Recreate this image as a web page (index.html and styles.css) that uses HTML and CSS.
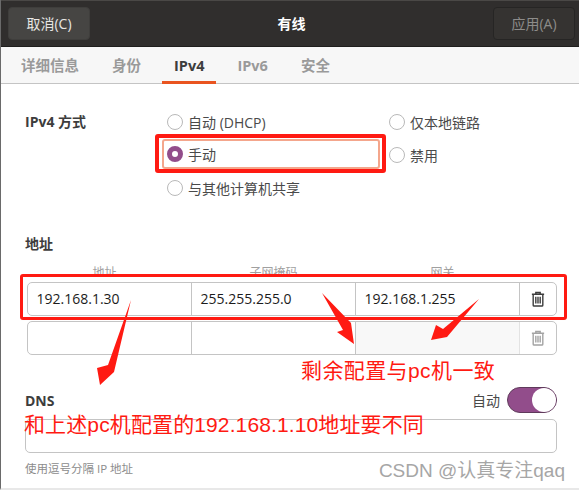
FILE: index.html
```html
<!DOCTYPE html>
<html lang="zh-CN">
<head>
  <meta charset="UTF-8" />
  <title>有线</title>
  <link rel="stylesheet" href="styles.css">
</head>
<body>
  <div class="window">
    <header class="titlebar">
      <button class="btn btn-cancel">取消(C)</button>
      <div class="title">有线</div>
      <button class="btn btn-apply">应用(A)</button>
    </header>

    <nav class="tabs">
      <div class="tab">详细信息</div>
      <div class="tab">身份</div>
      <div class="tab active">IPv4</div>
      <div class="tab">IPv6</div>
      <div class="tab">安全</div>
    </nav>

    <main class="content">
      <section class="method">
        <div class="section-title">IPv4 方式</div>
        <div class="radios">
          <div class="radio"><span class="dot"></span>自动 (DHCP)</div>
          <div class="radio"><span class="dot"></span>仅本地链路</div>
          <div class="radio focused"><span class="dot on"></span>手动</div>
          <div class="radio"><span class="dot"></span>禁用</div>
          <div class="radio"><span class="dot"></span>与其他计算机共享</div>
        </div>
      </section>

      <section class="address">
        <div class="section-title">地址</div>
        <div class="col-labels">
          <span>地址</span><span>子网掩码</span><span>网关</span>
        </div>
        <div class="addr-row">
          <div class="cell">192.168.1.30</div>
          <div class="cell">255.255.255.0</div>
          <div class="cell">192.168.1.255</div>
          <div class="trash">
            <svg width="14" height="16" viewBox="0 0 16 18"><path d="M5.5 3V1.5h5V3M1 3.5h14M2.5 3.5V16q0 1 1 1h9q1 0 1-1V3.5M5.5 6.5V14M8 6.5V14M10.5 6.5V14" fill="none" stroke="#3d3d3d" stroke-width="1.6"/></svg>
          </div>
        </div>
        <div class="addr-row second">
          <div class="cell"></div>
          <div class="cell"></div>
          <div class="cell empty"></div>
          <div class="trash">
            <svg width="14" height="16" viewBox="0 0 16 18"><path d="M5.5 3V1.5h5V3M1 3.5h14M2.5 3.5V16q0 1 1 1h9q1 0 1-1V3.5M5.5 6.5V14M8 6.5V14M10.5 6.5V14" fill="none" stroke="#a3a3a3" stroke-width="1.6"/></svg>
          </div>
        </div>
      </section>

      <section class="dns">
        <div class="dns-head">
          <div class="section-title">DNS</div>
          <div class="auto">自动<span class="switch"><span class="knob"></span></span></div>
        </div>
        <div class="dns-input"></div>
        <div class="hint">使用逗号分隔 IP 地址</div>
      </section>
    </main>

    <!-- 截图上的红色标注 -->
    <div class="mark mark-manual"></div>
    <div class="mark mark-row"></div>
    <svg class="arrows" width="579" height="490" viewBox="0 0 579 490">
      <polygon points="131,300 114,372 100,385 97,368 108,365" fill="#ff1a12"/>
      <polygon points="322,293 351,323 354,344 337,332 343,330" fill="#ff1a12"/>
      <polygon points="479,299 447,337 431,340 436,325 443,329" fill="#ff1a12"/>
    </svg>
    <div class="note note-same">剩余配置与pc机一致</div>
    <div class="note note-diff">和上述pc机配置的192.168.1.10地址要不同</div>
    <div class="watermark">CSDN @认真专注qaq</div>
  </div>
</body>
</html>
```

FILE: styles.css
```css
* { margin: 0; padding: 0; box-sizing: border-box; }

body {
  font-family: "Open Sans", "Noto Sans CJK SC", sans-serif;
  background: #fff;
  color: #3d3d3d;
}

.window {
  position: relative;
  width: 579px;
  height: 490px;
  overflow: hidden;
  display: flex;
  flex-direction: column;
  border-left: 1px solid #6a6a6a;
  border-bottom: 2px solid #e8e8e8;
}

.titlebar {
  height: 47px;
  flex: none;
  display: flex;
  align-items: center;
  justify-content: space-between;
  padding: 0 4px 1px 7px;
  background: #302e2d;
  border-top: 1px solid #4a4846;
  border-bottom: 1px solid #1f1e1d;
}

.btn {
  width: 82px;
  height: 33px;
  border-radius: 4px;
  font-family: inherit;
  font-size: 14px;
}
.btn-cancel { background: #464543; border: 1px solid #3f3e3c; color: #e8e6e3; }
.btn-apply { background: #353331; border: 1px solid #262524; color: #8d8c8a; }

.title {
  color: #fff;
  font-size: 14px;
  font-weight: 700;
}

.tabs {
  height: 37px;
  flex: none;
  display: flex;
  gap: 9px;
  padding-left: 8px;
  background: #f7f7f7;
  border-bottom: 1px solid #c4c4c4;
}

.tab {
  padding: 0 12px;
  line-height: 37px;
  font-size: 14.5px;
  font-weight: 700;
  color: #9a9a9a;
  height: 37px;
}
.tab.active {
  color: #3d3d3d;
  border-bottom: 3px solid #e95420;
}

.content {
  flex: 1;
  padding: 0 22px 0 24px;
}

.section-title {
  font-size: 14px;
  font-weight: 700;
  color: #3d3d3d;
}

.method {
  display: flex;
  padding-top: 25px;
  height: 150px;
}
.method .section-title { width: 142px; line-height: 26px; }

.radios {
  display: grid;
  grid-template-columns: 222px auto;
  grid-auto-rows: 33px;
  align-content: start;
  margin-top: -4px;
  margin-left: -6px;
}

.radio {
  display: flex;
  align-items: center;
  gap: 5px;
  padding-left: 6px;
  font-size: 14px;
  color: #4a4a4a;
}
.radio.focused {
  margin: 1px 3px 2px 1px;
  padding-left: 5px;
  outline: 2px solid #f4a68c;
  outline-offset: -2px;
  border-radius: 3px;
}

.dot {
  width: 16px;
  height: 16px;
  border-radius: 50%;
  border: 1px solid #b9b9b9;
  background: #fff;
}
.dot.on {
  border: 5px solid #924d8b;
  background: #fff;
}

.address .section-title { line-height: 20px; }

.col-labels {
  display: grid;
  grid-template-columns: repeat(3, 169px);
  height: 17px;
  margin: 11px 0 0 -5px;
  font-size: 12px;
  line-height: 16px;
  text-align: center;
  color: #a0a0a0;
}

.addr-row {
  position: relative;
  z-index: 2;
  display: grid;
  grid-template-columns: 164px 164px 164px 35px;
  height: 34px;
  margin-left: 2px;
  border: 1px solid #c4c4c4;
  border-radius: 5px;
  background: #fff;
}
.addr-row.second { margin-top: 5px; }

.cell {
  border-right: 1px solid #c4c4c4;
  padding-left: 8.5px;
  line-height: 31px;
  font-size: 14px;
  color: #1c1c1c;
}
.cell.empty { background: #f8f8f8; border-right-color: #e3e3e3; }

.trash {
  display: flex;
  align-items: center;
  justify-content: center;
}

.dns { padding-top: 32px; }

.dns-head {
  display: flex;
  align-items: center;
  justify-content: space-between;
  height: 26px;
}

.auto {
  display: flex;
  align-items: center;
  gap: 7px;
  font-size: 14px;
  color: #4a4a4a;
}

.switch {
  display: flex;
  justify-content: flex-end;
  width: 50px;
  height: 26px;
  border-radius: 13px;
  border: 1px solid #5f3a5b;
  background: #924d8b;
}
.knob {
  width: 24px;
  height: 24px;
  border-radius: 50%;
  background: #fff;
}

.dns-input {
  height: 34px;
  margin-top: 6px;
  border: 1px solid #c4c4c4;
  border-radius: 5px;
}

.hint {
  margin-top: 8px;
  font-size: 11.5px;
  line-height: 16px;
  color: #8c8c8c;
}

/* 标注 */
.mark {
  position: absolute;
  border: 3px solid #ff1a12;
  border-radius: 3px;
}
.mark-manual { left: 154px; top: 134px; width: 231px; height: 39px; border-width: 4px; }
.mark-row { left: 19px; top: 274px; width: 547px; height: 46px; z-index: 1; background: #fff; }

.arrows { position: absolute; left: -1px; top: 0; z-index: 3; }

.note {
  position: absolute;
  font-family: "Liberation Sans", "Noto Sans CJK SC", sans-serif;
  font-size: 21px;
  line-height: 26px;
  color: #ff1a12;
  white-space: nowrap;
}
.note-same { left: 300px; top: 358px; letter-spacing: 0.4px; }
.note-diff { left: 23px; top: 412px; letter-spacing: 0.12px; }

.watermark {
  position: absolute;
  right: 14px;
  top: 459px;
  font-family: "Liberation Sans", "Noto Sans CJK SC", sans-serif;
  font-size: 19px;
  line-height: 24px;
  color: #a6a6a6;
  white-space: nowrap;
}
```
